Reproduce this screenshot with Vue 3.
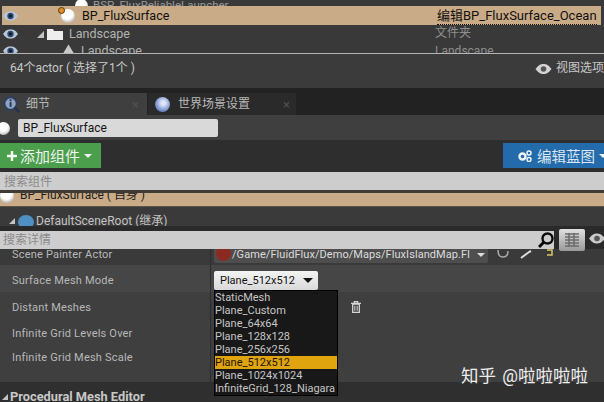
<script setup>
const options = [
  'StaticMesh', 'Plane_Custom', 'Plane_64x64', 'Plane_128x128',
  'Plane_256x256', 'Plane_512x512', 'Plane_1024x1024', 'InfiniteGrid_128_Niagara'
]
</script>

<template>
  <div class="app">
    <section class="outliner">
      <div class="row clip-top">
        <svg class="eye" viewBox="0 0 16 10"><use href="#eye-shape" /></svg>
        <span class="ball ind-1"></span>
        <span class="name">BSP_FluxReliableLauncher</span>
      </div>
      <div class="row selected">
        <svg class="eye" viewBox="0 0 16 10">
          <symbol id="eye-shape" viewBox="0 0 16 10">
            <path d="M0 5C3 1 5 0 8 0s5 1 8 5c-3 4-5 5-8 5S3 9 0 5z" fill="#b9c6d8" />
            <circle cx="8" cy="5" r="3.4" fill="#2d4a70" />
            <circle cx="8" cy="5" r="1.5" fill="#0c1626" />
          </symbol>
          <use href="#eye-shape" />
        </svg>
        <span class="ball-wrap"><span class="ball"></span><i class="dot"></i></span>
        <span class="name">BP_FluxSurface</span>
        <span class="edit-link">编辑BP_FluxSurface_Ocean</span>
      </div>
      <div class="row plain">
        <svg class="eye" viewBox="0 0 16 10"><use href="#eye-shape" /></svg>
        <i class="tri folder-tri"></i>
        <svg class="folder" viewBox="0 0 16 12"><path d="M0 1h6l1 2h9v9H0z" fill="#eeeeee" /></svg>
        <span class="name">Landscape</span>
        <span class="type">文件夹</span>
      </div>
      <div class="row partial">
        <svg class="eye" viewBox="0 0 16 10"><use href="#eye-shape" /></svg>
        <svg class="mount" viewBox="0 0 12 10"><path d="M0 10L6 0l6 10z" fill="#c9c9c9" /></svg>
        <span class="name">Landscape</span>
        <span class="type">Landscape</span>
      </div>
    </section>

    <section class="status">
      <span class="count">64个actor ( 选择了1个 )</span>
      <span class="view-opts">
        <svg class="view-eye" viewBox="0 0 16 10">
          <path d="M0 5C3 1 5 0 8 0s5 1 8 5c-3 4-5 5-8 5S3 9 0 5z" fill="#d4d4d4" />
          <circle cx="8" cy="5" r="2.8" fill="#555" />
        </svg>
        视图选项
      </span>
    </section>

    <nav class="tabs">
      <div class="tab active">
        <svg class="tab-icon" viewBox="0 0 18 18">
          <circle cx="8" cy="8" r="6.5" fill="#8fa3c4" stroke="#2c3f63" stroke-width="2" />
          <rect x="7" y="6.5" width="2" height="5" fill="#26344f" />
          <rect x="7" y="3.5" width="2" height="2" fill="#26344f" />
          <path d="M12 12l5 5" stroke="#26344f" stroke-width="2.5" />
        </svg>
        <span>细节</span>
        <i class="close">×</i>
      </div>
      <div class="tab">
        <span class="globe"></span>
        <span>世界场景设置</span>
        <i class="close">×</i>
      </div>
    </nav>

    <div class="namebar">
      <span class="ball small"></span>
      <div class="name-field">BP_FluxSurface</div>
    </div>

    <div class="actions">
      <button class="add-btn">
        <svg class="plus" viewBox="0 0 10 10"><path d="M5 0v10M0 5h10" stroke="#f4f8f4" stroke-width="2.4" /></svg>
        添加组件<i class="caret white"></i>
      </button>
      <button class="bp-btn">
        <svg class="gears" viewBox="0 0 14 12">
          <circle cx="4.5" cy="6.5" r="3" fill="none" stroke="#f0f3f7" stroke-width="2.4" />
          <circle cx="11" cy="3" r="2" fill="none" stroke="#f0f3f7" stroke-width="1.5" />
          <circle cx="11" cy="9.5" r="2" fill="none" stroke="#f0f3f7" stroke-width="1.5" />
        </svg>
        编辑蓝图<i class="caret white"></i>
      </button>
    </div>

    <div class="search comp-search">搜索组件</div>

    <div class="tree">
      <div class="tree-self">
        <span class="ball tree-ball"></span>
        <span class="self-name">BP_FluxSurface ( 自身 )</span>
      </div>
      <div class="tree-root">
        <i class="tri root-tri"></i>
        <span class="root-icon"></span>
        <span class="root-name">DefaultSceneRoot (继承)</span>
      </div>
    </div>

    <div class="detail-search">
      <div class="search detail-input">
        <span>搜索详情</span>
        <svg class="loupe" viewBox="0 0 16 16">
          <circle cx="9.5" cy="6.5" r="5" fill="none" stroke="#0a0a0a" stroke-width="2.4" />
          <path d="M6 10l-5 5" stroke="#0a0a0a" stroke-width="3" />
        </svg>
      </div>
      <div class="grid-btn">
        <svg viewBox="0 0 14 14"><path d="M0 1h14M0 4h14M0 7h14M0 10h14M0 13h14M4 0v14M9 0v14" stroke="#6e6e6e" stroke-width="1.6" /></svg>
      </div>
      <svg class="side-eye" viewBox="0 0 16 10">
        <path d="M0 5C3 1 5 0 8 0s5 1 8 5c-3 4-5 5-8 5S3 9 0 5z" fill="#c9c9c9" />
        <circle cx="8" cy="5" r="2.8" fill="#555" />
      </svg>
    </div>

    <section class="details">
      <div class="prop painter">
        <div class="label">Scene Painter Actor</div>
        <div class="value painter-value">
          <div class="asset">
            <span class="red-dot"></span>
            <span class="asset-path">/Game/FluidFlux/Demo/Maps/FluxIslandMap.FI</span>
            <i class="caret light"></i>
          </div>
          <svg class="tool first" viewBox="0 0 12 10"><path d="M1 1c0 6 2 7 5 7s5-2 5-6" fill="none" stroke="#aaa" stroke-width="1.5" /></svg>
          <svg class="tool" viewBox="0 0 12 10"><path d="M1 9l8-6 2-1" fill="none" stroke="#ddd" stroke-width="2" /></svg>
          <svg class="tool" viewBox="0 0 12 10"><path d="M4 1h5v5H4" fill="none" stroke="#d8c66a" stroke-width="1.5" /></svg>
        </div>
      </div>
      <div class="prop mode">
        <div class="label">Surface Mesh Mode</div>
        <div class="value">
          <div class="combo">Plane_512x512<i class="caret dark"></i></div>
        </div>
      </div>
      <div class="prop distant">
        <div class="label">Distant Meshes</div>
        <div class="value">
          <svg class="trash" viewBox="0 0 12 13">
            <path d="M0 2h12M4 2V0h4v2M2 3h8v10H2z" fill="none" stroke="#d6d6d6" stroke-width="1.5" />
            <path d="M4.6 5v6M7.4 5v6" stroke="#d6d6d6" stroke-width="1.2" />
          </svg>
        </div>
      </div>
      <div class="prop levels">
        <div class="label">Infinite Grid Levels Over</div>
        <div class="value"></div>
      </div>
      <div class="prop scale">
        <div class="label">Infinite Grid Mesh Scale</div>
        <div class="value"></div>
      </div>
      <div class="section-head">
        <i class="tri head-tri"></i>
        <span>Procedural Mesh Editor</span>
      </div>
    </section>

    <ul class="dropdown">
      <li v-for="o in options" :key="o" :class="{ current: o === 'Plane_512x512' }">{{ o }}</li>
    </ul>

    <div class="watermark">知乎 @啦啦啦啦</div>
  </div>
</template>

<style>
html, body { margin: 0; background: #3c3c3c; }
</style>

<style scoped>
.app {
  position: relative;
  width: 604px;
  height: 402px;
  overflow: hidden;
  background: #3c3c3c;
  color: #c8c8c8;
  font-family: Roboto, "Noto Sans CJK SC", sans-serif;
  font-size: 12px;
}
i { font-style: normal; display: block; }

/* outliner */
.outliner { height: 54px; overflow: hidden; background: #393939; border-bottom: 1px solid #b4b4b4; box-sizing: border-box; }
.row { display: flex; align-items: center; position: relative; white-space: nowrap; font-size: 12px; }
.eye { width: 15px; height: 10px; margin-left: 3px; flex: none; }
.clip-top { height: 6px; overflow: hidden; align-items: flex-end; color: #999; font-size: 11.5px; }
.clip-top .eye { visibility: hidden; }
.ind-1 { margin-left: 57px; margin-bottom: -6px; }
.clip-top .name { margin-left: 5px; margin-bottom: -6px; }
.selected { height: 19px; background: #c9ab87; margin: 0 3px 0 2px; color: #101010; }
.selected .eye { margin-left: 1px; }
.ball-wrap { position: relative; margin-left: 40px; display: block; width: 20px; height: 17px; }
.dot { position: absolute; left: 0; top: 0; width: 7px; height: 7px; border-radius: 50%; background: #e08b24; border: 1px solid #5a3a10; box-sizing: border-box; }
.ball { display: block; width: 13px; height: 13px; border-radius: 50%; background: radial-gradient(circle at 45% 35%, #fff 45%, #999 90%, #333); flex: none; }
.ball-wrap .ball { position: absolute; left: 3px; top: 2px; width: 14px; height: 14px; }
.selected .name { margin-left: 4px; font-size: 12.5px; }
.edit-link { position: absolute; left: 435px; top: 2px; color: #111; font-size: 13px; line-height: 16px; border-bottom: 1px dotted #111; }
.plain { height: 18px; }
.plain .name, .partial .name { color: #b4b4b4; font-size: 12.5px; }
.plain .name { margin: -1px 0 0 1px; }
.folder-tri { margin-left: 19px; }
.tri { width: 0; height: 0; border-style: solid; border-width: 0 0 7px 7px; border-color: transparent transparent #c4c4c4 transparent; flex: none; }
.folder { width: 16px; height: 12px; margin: 0 5px 0 3px; }
.type { position: absolute; left: 435px; top: 0; line-height: 17px; color: #8e8e8e; font-size: 12px; }
.partial { height: 10px; overflow: hidden; align-items: flex-start; }
.partial .eye { margin-top: 3px; }
.mount { width: 11px; height: 10px; margin: 1px 7px 0 45px; }
.partial .name { margin-top: 1px; line-height: 14px; }
.partial .type { top: 1px; line-height: 14px; }

/* status */
.status { height: 34px; background: #3b3b3b; display: flex; align-items: flex-start; justify-content: space-between; padding: 6px 0 0 10px; box-sizing: border-box; color: #c9c9c9; font-size: 12px; line-height: 17px; }
.view-opts { display: flex; align-items: center; gap: 4px; white-space: nowrap; }
.view-eye { width: 17px; height: 10px; }

/* tabs */
.tabs { height: 27px; background: #222222; display: flex; gap: 1px; align-items: flex-end; }
.tab { width: 148px; height: 22px; display: flex; align-items: center; gap: 6px; box-sizing: border-box; padding-left: 3px; background: #2a2a2a; position: relative; color: #b9b9b9; font-size: 12px; line-height: 18px; }
.tab.active { width: 147px; background: #3f3f3f; }
.tab:not(.active) { padding-left: 7px; gap: 8px; }
.tab-icon { width: 17px; height: 17px; flex: none; }
.globe { width: 15px; height: 15px; border-radius: 50%; background: radial-gradient(circle at 55% 40%, #dfe6f6 15%, #7c95d2 60%, #3b4a80); flex: none; }
.close { position: absolute; right: 8px; top: 3px; color: #4f4f4f; font-size: 13px; }
.tab:not(.active) .close { right: 6px; }

.namebar { height: 25px; background: #3f3f3f; display: flex; align-items: flex-start; padding-top: 4px; box-sizing: border-box; overflow: hidden; }
.small { margin: 3px 0 0 -3px; }
.name-field { width: 200px; height: 18px; margin-left: 8px; background: #d9d9d9; border-radius: 2px; color: #151515; font-size: 12px; line-height: 18px; padding-left: 5px; box-sizing: border-box; }

.actions { height: 32px; background: #2e2e2e; display: flex; justify-content: space-between; align-items: flex-start; padding-top: 3px; box-sizing: border-box; }
button { border: 0; padding: 0; font-family: inherit; display: flex; align-items: center; color: #eef4ee; }
.add-btn { width: 101px; height: 25px; background: #4b9e4b; font-size: 15px; padding-left: 7px; box-sizing: border-box; white-space: nowrap; }
.plus { width: 10px; height: 10px; margin-right: 3px; flex: none; }
.bp-btn { width: 101px; height: 25px; background: #236bab; font-size: 14.5px; padding-left: 15px; box-sizing: border-box; color: #dce6f2; white-space: nowrap; }
.gears { width: 14px; height: 12px; margin-right: 5px; flex: none; }
.caret { width: 0; height: 0; border-style: solid; border-width: 4px 4px 0; margin-left: 4px; flex: none; }
.caret.white { border-color: #eee transparent transparent; }
.caret.light { border-color: #ddd transparent transparent; }
.caret.dark { border-color: #111 transparent transparent; border-width: 5px 5px 0; margin-left: auto; margin-right: 5px; }

.search { background: #cdcdcd; color: #8b8b8b; font-size: 12px; height: 18px; line-height: 18px; padding-left: 4px; box-sizing: border-box; }
.comp-search { padding-top: 1px; }

.tree { height: 36px; overflow: hidden; background: #3a3a3a; }
.tree-self { height: 17px; background: #c9ab87; box-sizing: border-box; border-top: 3px solid #3f3a35; border-bottom: 1px solid #5c544a; color: #1c1c1c; font-size: 12px; line-height: 13px; overflow: hidden; white-space: nowrap; padding-left: 20px; position: relative; }
.self-name { display: block; margin-top: -4px; }
.tree-ball { position: absolute; left: 0; top: -4px; width: 14px; height: 14px; }
.tree-root { height: 19px; display: flex; align-items: flex-end; color: #c2c2c2; font-size: 12px; white-space: nowrap; overflow: hidden; padding-left: 9px; line-height: 14px; }
.root-tri { margin-bottom: 2px; border-width: 0 0 6px 6px; }
.root-icon { width: 16px; height: 14px; border-radius: 50%; background: #4f90c4; margin: 0 2px -3px 3px; flex: none; }
.root-name { margin-bottom: -2px; }

.detail-search { height: 23px; background: #2a2a2a; display: flex; align-items: flex-end; position: relative; }
.detail-input { width: 554px; height: 18px; position: relative; padding-left: 3px; flex: none; }
.loupe { position: absolute; right: 0; top: 1px; width: 16px; height: 16px; }
.grid-btn { width: 26px; height: 22px; margin-left: 5px; background: linear-gradient(#e0e0e0, #999); border-radius: 2px; display: flex; align-items: center; justify-content: center; flex: none; margin-bottom: -2px; position: relative; z-index: 1; }
.grid-btn svg { width: 14px; height: 14px; }
.side-eye { width: 16px; height: 11px; margin-left: 4px; flex: none; margin-bottom: 5px; }

.details { height: 153px; background: #3f3f3f; font-size: 11px; letter-spacing: .2px; }
.prop { display: flex; box-sizing: border-box; overflow: hidden; }
.label { width: 211px; flex: none; padding-left: 12px; box-sizing: border-box; border-right: 1px solid #2d2d2d; color: #b8b8b8; }
.value { flex: 1; min-width: 0; display: flex; align-items: flex-start; position: relative; }
.painter { height: 16px; background: #3a3a3a; line-height: 11px; }
.painter-value { padding-left: 3px; gap: 11px; }
.asset { width: 274px; height: 14px; background: #4e4e4e; display: flex; align-items: flex-start; color: #dcdcdc; font-size: 11px; line-height: 11px; letter-spacing: .06px; white-space: nowrap; overflow: hidden; flex: none; border-radius: 0 0 2px 2px; }
.red-dot { width: 15px; height: 15px; border-radius: 50%; background: #8c2a22; margin: -3px 1px 0 2px; flex: none; }
.asset-path { flex: 1; overflow: hidden; }
.asset .caret { margin: 4px 3px 0 4px; }
.tool { width: 12px; height: 10px; flex: none; }
.tool.first { margin-left: -2px; }
.mode { height: 27px; background: #464646; line-height: 27px; }
.mode .label, .distant .label { padding-top: 2px; }
.levels .label, .scale .label { padding-top: 1px; }
.distant { height: 28px; line-height: 28px; }
.levels { height: 26px; line-height: 26px; }
.scale { height: 36px; line-height: 22px; }
.combo { width: 104px; height: 19px; margin: 6px 0 0 3px; background: linear-gradient(#f4f4f4, #d8d8d8); border-radius: 2px; color: #111; font-size: 11px; line-height: 19px; letter-spacing: 0; display: flex; align-items: center; padding-left: 6px; box-sizing: border-box; flex: none; }
.trash { width: 10px; height: 12px; margin: 9px 0 0 140px; flex: none; }
.section-head { height: 20px; background: #2f2f2f; display: flex; align-items: center; padding-left: 2px; font-weight: 700; font-size: 12.8px; letter-spacing: 0; color: #c8c8c8; white-space: nowrap; }
.head-tri { border-width: 0 0 6px 6px; margin: 9px 2px 0 0; }
.section-head span { margin-top: 8px; }

/* overlays */
.dropdown { position: absolute; left: 214px; top: 290px; width: 124px; height: 106px; margin: 0; padding: 0; box-sizing: border-box; list-style: none; background: #181818; border: 1px solid #000; font-size: 11px; letter-spacing: 0; color: #c6c6c6; }
.dropdown li { height: 13px; line-height: 13px; white-space: nowrap; overflow: hidden; }
.dropdown li.current { background: #e0a40e; color: #1c1400; }
.watermark { position: absolute; left: 461px; top: 364px; color: #eeeeee; font-size: 17.5px; line-height: 24px; white-space: nowrap; word-spacing: 2px; }
</style>
